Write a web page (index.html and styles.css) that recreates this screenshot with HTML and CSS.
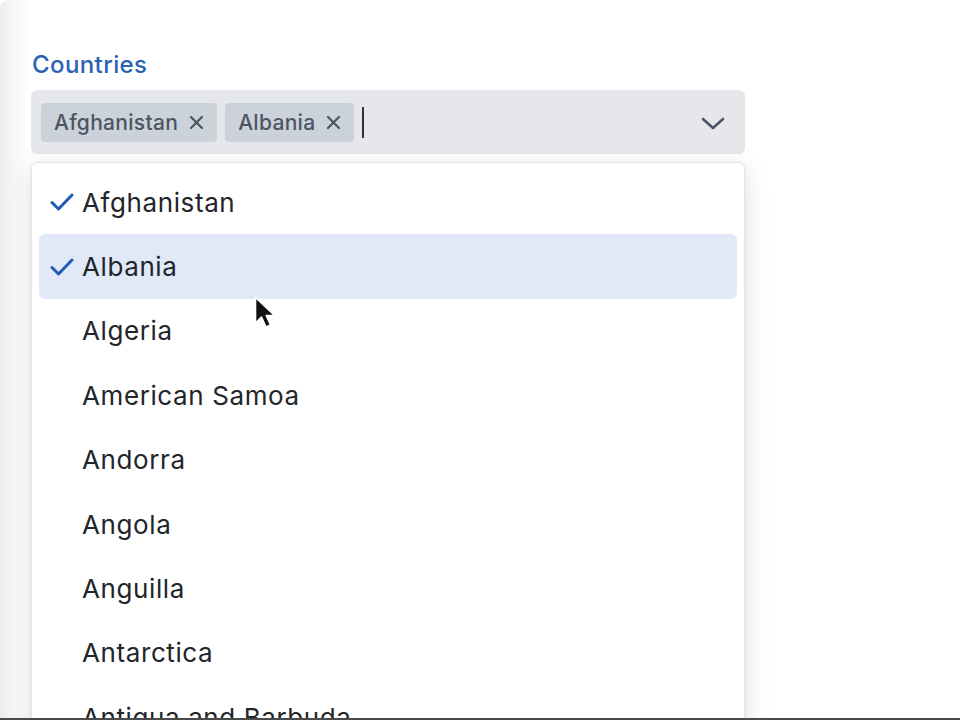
FILE: index.html
```html
<!DOCTYPE html>
<html lang="en">
<head>
<meta charset="utf-8">
<title>Countries</title>
<link rel="stylesheet" href="styles.css">
</head>
<body>
<div class="window">
  <div class="field">
    <div class="label">Countries</div>
    <div class="control">
      <span class="chip">Afghanistan <svg class="chip-x" width="15" height="15" viewBox="0 0 15 15"><path d="M2 2 L13 13 M13 2 L2 13" stroke="#4b5563" stroke-width="2.2" stroke-linecap="round"/></svg></span>
      <span class="chip">Albania <svg class="chip-x" width="15" height="15" viewBox="0 0 15 15"><path d="M2 2 L13 13 M13 2 L2 13" stroke="#4b5563" stroke-width="2.2" stroke-linecap="round"/></svg></span>
      <span class="caret"></span>
      <span class="spacer"></span>
      <svg class="chevron" width="24" height="14" viewBox="0 0 24 14"><path d="M2 2 L12 11 L22 2" fill="none" stroke="#4b5563" stroke-width="2.6" stroke-linecap="round" stroke-linejoin="round"/></svg>
    </div>
    <div class="menu">
      <div class="option"><svg class="check" width="24" height="20" viewBox="0 0 24 20"><path d="M2 10.5 L8.5 17 L22 3" fill="none" stroke="#1f5bb4" stroke-width="3" stroke-linecap="round" stroke-linejoin="round"/></svg><span class="opt-text">Afghanistan</span></div>
      <div class="option active"><svg class="check" width="24" height="20" viewBox="0 0 24 20"><path d="M2 10.5 L8.5 17 L22 3" fill="none" stroke="#1f5bb4" stroke-width="3" stroke-linecap="round" stroke-linejoin="round"/></svg><span class="opt-text">Albania</span></div>
      <div class="option"><span class="nocheck"></span><span class="opt-text">Algeria</span></div>
      <div class="option"><span class="nocheck"></span><span class="opt-text">American Samoa</span></div>
      <div class="option"><span class="nocheck"></span><span class="opt-text">Andorra</span></div>
      <div class="option"><span class="nocheck"></span><span class="opt-text">Angola</span></div>
      <div class="option"><span class="nocheck"></span><span class="opt-text">Anguilla</span></div>
      <div class="option"><span class="nocheck"></span><span class="opt-text">Antarctica</span></div>
      <div class="option"><span class="nocheck"></span><span class="opt-text">Antigua and Barbuda</span></div>
      <div class="option"><span class="nocheck"></span><span class="opt-text">Argentina</span></div>
    </div>
  </div>
  <svg class="pointer" width="24" height="34" viewBox="0 0 24 34"><path d="M1.5 1.5 L1.5 27 L7.5 21 L12 31 L16.5 29 L12.2 19.5 L20.5 19.5 Z" fill="#111" stroke="#fff" stroke-width="1.6" stroke-linejoin="round"/></svg>
</div>
<div class="bottom-bar"></div>
</body>
</html>
```
FILE: styles.css
```css
html, body {
  margin: 0;
  padding: 0;
}
body {
  width: 960px;
  height: 720px;
  overflow: hidden;
  background: #fff;
  font-family: Inter, "Noto Sans", sans-serif;
}
.window {
  position: relative;
  height: 718px;
  overflow: hidden;
  background: linear-gradient(to right, #ebecef 0px, #f6f6f8 12px, #ffffff 30px);
  border-top-left-radius: 8px;
  border-top-right-radius: 8px;
}
.field {
  width: 714px;
  margin-left: 31px;
  padding-top: 51px;
}
.label {
  font-size: 24px;
  line-height: 28px;
  font-weight: 500;
  letter-spacing: 0.4px;
  color: #2a62b6;
  padding-left: 1px;
  margin-bottom: 11px;
}
.control {
  height: 64px;
  box-sizing: border-box;
  background: #e5e7eb;
  border-radius: 6px;
  display: flex;
  align-items: center;
  padding: 0 20px 0 10px;
  gap: 8px;
}
.chip {
  display: inline-flex;
  align-items: center;
  height: 39px;
  padding: 0 13px;
  border-radius: 4px;
  background: #cbd2da;
  color: #4b5563;
  font-size: 21px;
  font-weight: 500;
  letter-spacing: 0.3px;
  gap: 11px;
}
.chip-x {
  flex: none;
}
.caret {
  width: 2px;
  height: 31px;
  background: #333;
}
.spacer {
  flex: 1;
}
.chevron {
  margin-top: 3px;
}
.menu {
  margin-top: 8px;
  background: #fff;
  border-radius: 6px;
  border: 1px solid #e3e4e8;
  box-shadow: 0 6px 28px rgba(30, 35, 50, 0.12), 0 2px 6px rgba(30, 35, 50, 0.05);
  padding: 7px 7px;
}
.option {
  height: 64.4px;
  display: flex;
  align-items: center;
  border-radius: 6px;
  padding-left: 11px;
}
.option.active {
  background: #e1e9f8;
}
.check, .nocheck {
  width: 24px;
  flex: none;
}
.opt-text {
  margin-left: 8px;
  font-size: 26px;
  letter-spacing: 0.6px;
  color: #222529;
}
.pointer {
  position: absolute;
  left: 254px;
  top: 296px;
}
.bottom-bar {
  height: 2px;
  background: #4a4a4a;
}
```
